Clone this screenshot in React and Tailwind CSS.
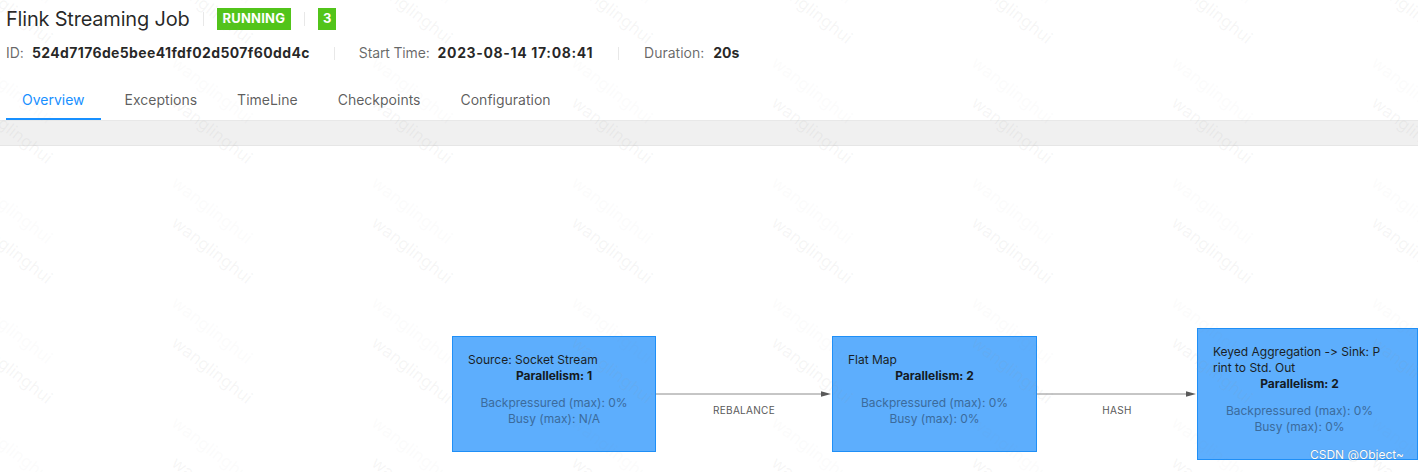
import React from "react";

const FONT = {
  fontFamily: 'Inter, "Noto Sans", "Liberation Sans", sans-serif',
};

function Divider({ className = "" }) {
  return <span className={"inline-block w-px bg-[#e8e8e8] " + className} />;
}

function Edge({ width, label }) {
  const w = width;
  return (
    <div className="shrink-0 flex flex-col h-[62px]" style={{ width: w }}>
      <div className="h-[26px]" />
      <svg width={w} height="10" className="block">
        <line x1="0" y1="5" x2={w - 10} y2="5" stroke="#8c8c8c" strokeWidth="1" />
        <polygon points={`${w - 11},2.2 ${w - 1},5 ${w - 11},7.8`} fill="#595959" />
      </svg>
      <div className="h-[26px] pt-[5px] text-center text-[10px] leading-[12px] tracking-[0.3px] text-[#595959]">
        {label}
      </div>
    </div>
  );
}

function Node({ width, title, parallelism, busy, wide }) {
  return (
    <div
      className={
        "shrink-0 border border-[#1f8ff7] bg-[#5daefd] pt-[15px] pb-[24px] pl-[15px] text-[12px] leading-[16px] " +
        (wide ? "pr-[31px]" : "pr-[15px]")
      }
      style={{ width }}
    >
      <div className="text-left text-[#1a1f26]">{title}</div>
      <div className="text-center font-bold text-[#141a22]">Parallelism: {parallelism}</div>
      <div className="mt-[11px] text-center text-[#3b6b9c]">Backpressured (max): 0%</div>
      <div className="text-center text-[#3b6b9c]">Busy (max): {busy}</div>
    </div>
  );
}

function Watermarks() {
  const items = [];
  for (let r = 0; r < 5; r++) {
    for (let c = 0; c < 8; c++) {
      items.push({ x: 12 + 200 * c, y: 10 + 120 * r, o: 1, k: `m${r}-${c}` });
      items.push({ x: 12 + 200 * c, y: -30 + 120 * r, o: 0.35, k: `f${r}-${c}` });
    }
  }
  return (
    <div className="pointer-events-none absolute inset-0 z-10 overflow-hidden">
      {items.map((it) => (
        <span
          key={it.k}
          className="absolute -translate-x-1/2 -translate-y-1/2 rotate-[38deg] whitespace-nowrap text-[17px] leading-[20px] text-[rgba(150,150,150,0.09)]"
          style={{ left: it.x, top: it.y, opacity: it.o }}
        >
          wanglinghui
        </span>
      ))}
    </div>
  );
}

const tabs = ["Overview", "Exceptions", "TimeLine", "Checkpoints", "Configuration"];

export default function App() {
  return (
    <div
      className="relative h-[472px] w-[1418px] overflow-hidden bg-white [font-feature-settings:'calt'_0,'liga'_0]"
      style={FONT}
    >
      {/* title row */}
      <div className="flex h-[38px] items-center pl-[6px]">
        <span className="text-[20px] leading-[28px] text-[rgba(0,0,0,0.85)] tracking-[-0.2px]">Flink Streaming Job</span>
        <Divider className="mx-[13px] h-[14px]" />
        <span className="flex h-[22px] items-center bg-[#52c41a] px-[6px] text-[13px] font-bold tracking-[0.2px] text-white">
          RUNNING
        </span>
        <Divider className="mx-[13px] h-[14px]" />
        <span className="flex h-[22px] w-[18px] items-center justify-center bg-[#52c41a] text-[13px] font-bold text-white">
          3
        </span>
      </div>

      {/* info row */}
      <div className="flex h-[30px] items-center pl-[6px] text-[14px] leading-[20px]">
        <span className="text-[rgba(0,0,0,0.6)]">ID:</span>
        <span className="ml-[8px] font-bold tracking-[0.37px] text-[rgba(0,0,0,0.85)]">524d7176de5bee41fdf02d507f60dd4c</span>
        <Divider className="mx-[24px] h-[13px]" />
        <span className="text-[rgba(0,0,0,0.6)] tracking-[-0.15px]">Start Time:</span>
        <span className="ml-[8px] font-bold tracking-[0.65px] text-[rgba(0,0,0,0.85)]">2023-08-14 17:08:41</span>
        <Divider className="mx-[25px] h-[13px]" />
        <span className="text-[rgba(0,0,0,0.6)]">Duration:</span>
        <span className="ml-[9px] font-bold text-[rgba(0,0,0,0.85)]">20s</span>
      </div>

      {/* tabs */}
      <div className="mt-[10px] flex gap-[8px] border-b border-[#e8e8e8] pl-[6px]">
        {tabs.map((t, i) => (
          <div
            key={t}
            className={
              "border-b-2 px-[16px] pt-[11px] pb-[7px] text-[14px] leading-[22px] " +
              (i === 0 ? "border-[#1890ff] text-[#1890ff]" : "border-transparent text-[rgba(0,0,0,0.65)]")
            }
          >
            {t}
          </div>
        ))}
      </div>

      {/* gray band */}
      <div className="h-[25px] border-b border-[#e6e6e6] bg-[#f0f0f0]" />

      {/* canvas */}
      <div className="h-[326px] overflow-hidden pt-[182px]">
        <div className="flex h-[132px] items-center pl-[452px]">
          <Node width={204} title="Source: Socket Stream" parallelism="1" busy="N/A" />
          <Edge width={176} label="REBALANCE" />
          <Node width={205} title="Flat Map" parallelism="2" busy="0%" />
          <Edge width={160} label="HASH" />
          <Node
            width={221}
            wide
            title={
              <>
                Keyed Aggregation -&gt; Sink: P
                <br />
                rint to Std. Out
              </>
            }
            parallelism="2"
            busy="0%"
          />
        </div>
      </div>

      <Watermarks />

      <span className="pointer-events-none absolute right-[14px] bottom-[10px] z-20 text-[12px] leading-[14px] text-white [text-shadow:0_0_1px_rgba(0,0,0,0.35)]">
        CSDN @Object~
      </span>
    </div>
  );
}
